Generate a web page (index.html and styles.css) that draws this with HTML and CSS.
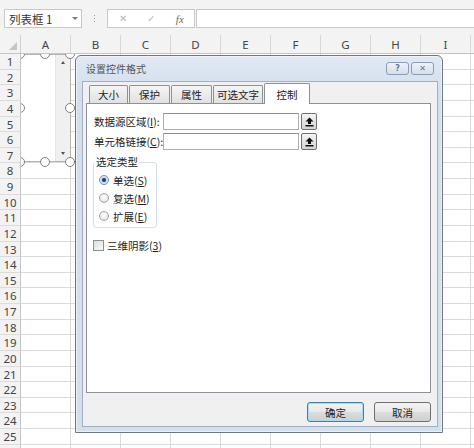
FILE: index.html
```html
<!DOCTYPE html>
<html>
<head>
<meta charset="utf-8">
<link rel="stylesheet" href="styles.css">
</head>
<body>
<div class="toolbar">
  <div class="namebox"><span>列表框 1</span><span class="caret"></span></div>
  <div class="dots"><i></i><i></i><i></i></div>
  <div class="fxbox"><span class="fi">✕</span><span class="fi">✓</span><span class="fi fx">fx</span></div>
  <div class="formula"></div>
</div>
<div class="sheet">
  <div class="hrow">
    <div class="corner"><span class="tri"></span></div>
    <div class="ch">A</div><div class="ch">B</div><div class="ch">C</div><div class="ch">D</div><div class="ch">E</div><div class="ch">F</div><div class="ch">G</div><div class="ch">H</div><div class="ch">I</div><div class="ch"></div>
  </div>
  <div class="row"><div class="rn">1</div><div class="cells"></div></div>
  <div class="row"><div class="rn">2</div><div class="cells"></div></div>
  <div class="row"><div class="rn">3</div><div class="cells"></div></div>
  <div class="row"><div class="rn">4</div><div class="cells"></div></div>
  <div class="row"><div class="rn">5</div><div class="cells"></div></div>
  <div class="row"><div class="rn">6</div><div class="cells"></div></div>
  <div class="row"><div class="rn">7</div><div class="cells"></div></div>
  <div class="row"><div class="rn">8</div><div class="cells"></div></div>
  <div class="row"><div class="rn">9</div><div class="cells"></div></div>
  <div class="row"><div class="rn">10</div><div class="cells"></div></div>
  <div class="row"><div class="rn">11</div><div class="cells"></div></div>
  <div class="row"><div class="rn">12</div><div class="cells"></div></div>
  <div class="row"><div class="rn">13</div><div class="cells"></div></div>
  <div class="row"><div class="rn">14</div><div class="cells"></div></div>
  <div class="row"><div class="rn">15</div><div class="cells"></div></div>
  <div class="row"><div class="rn">16</div><div class="cells"></div></div>
  <div class="row"><div class="rn">17</div><div class="cells"></div></div>
  <div class="row"><div class="rn">18</div><div class="cells"></div></div>
  <div class="row"><div class="rn">19</div><div class="cells"></div></div>
  <div class="row"><div class="rn">20</div><div class="cells"></div></div>
  <div class="row"><div class="rn">21</div><div class="cells"></div></div>
  <div class="row"><div class="rn">22</div><div class="cells"></div></div>
  <div class="row"><div class="rn">23</div><div class="cells"></div></div>
  <div class="row"><div class="rn">24</div><div class="cells"></div></div>
  <div class="row"><div class="rn">25</div><div class="cells"></div></div>
  <div class="row"><div class="rn"></div><div class="cells"></div></div>

  <div class="listbox">
    <div class="lbody"></div>
    <div class="sb"><span class="up"></span><span class="down"></span></div>
  </div>
  <span class="hd h1"></span><span class="hd h2"></span><span class="hd h3"></span>
  <span class="hd h4"></span><span class="hd h5"></span>
  <span class="hd h6"></span><span class="hd h7"></span><span class="hd h8"></span>

  <div class="dlg">
    <div class="tbar">
      <span class="title">设置控件格式</span>
      <span class="tbtn help">?</span>
      <span class="tbtn close">✕</span>
    </div>
    <div class="client">
      <div class="tabs">
        <div class="tab w1">大小</div>
        <div class="tab w2">保护</div>
        <div class="tab w3">属性</div>
        <div class="tab w4">可选文字</div>
        <div class="tab w5 on">控制</div>
      </div>
      <div class="panel">
        <div class="frow">
          <span class="flabel">数据源区域(<u>I</u>):</span>
          <span class="finput"></span>
          <span class="rbtn"><svg width="9" height="10" viewBox="0 0 9 10"><path d="M4.5 0.5 L8.5 4.5 H6 V7 H3 V4.5 H0.5 Z" fill="#111"/><rect x="0.5" y="8" width="8" height="1.5" fill="#111"/></svg></span>
        </div>
        <div class="frow">
          <span class="flabel">单元格链接(<u>C</u>):</span>
          <span class="finput"></span>
          <span class="rbtn"><svg width="9" height="10" viewBox="0 0 9 10"><path d="M4.5 0.5 L8.5 4.5 H6 V7 H3 V4.5 H0.5 Z" fill="#111"/><rect x="0.5" y="8" width="8" height="1.5" fill="#111"/></svg></span>
        </div>
        <fieldset class="group">
          <legend>选定类型</legend>
          <div class="opt"><span class="radio on"></span><span>单选(<u>S</u>)</span></div>
          <div class="opt"><span class="radio"></span><span>复选(<u>M</u>)</span></div>
          <div class="opt"><span class="radio"></span><span>扩展(<u>E</u>)</span></div>
        </fieldset>
        <div class="chk"><span class="cbox"></span><span>三维阴影(<u>3</u>)</span></div>
      </div>
      <div class="btns">
        <span class="btn def">确定</span>
        <span class="btn">取消</span>
      </div>
    </div>
  </div>
</div>
</body>
</html>
```
FILE: styles.css
```css
body {
  margin: 0;
  width: 474px;
  height: 448px;
  overflow: hidden;
  background: #fff;
  font-family: "Noto Sans CJK SC", sans-serif;
}

/* toolbar */
.toolbar {
  display: flex;
  align-items: flex-start;
  height: 35px;
  box-sizing: border-box;
  padding-top: 9px;
  background: #f3f3f3;
}
.namebox {
  margin-left: 4px;
  width: 78px;
  height: 19px;
  flex: none;
  box-sizing: border-box;
  border: 1px solid #c8c8c8;
  background: #fff;
  display: flex;
  align-items: center;
  justify-content: space-between;
  padding: 0 3px 0 4px;
  font-size: 11.5px;
  color: #333;
}
.caret {
  width: 0;
  height: 0;
  border-left: 3px solid transparent;
  border-right: 3px solid transparent;
  border-top: 3px solid #777;
}
.dots {
  width: 25px;
  height: 19px;
  flex: none;
  display: flex;
  flex-direction: column;
  align-items: center;
  justify-content: center;
  gap: 2px;
}
.dots i {
  display: block;
  width: 1px;
  height: 1px;
  background: #9a9a9a;
}
.fxbox {
  width: 88px;
  height: 19px;
  flex: none;
  box-sizing: border-box;
  border: 1px solid #c8c8c8;
  background: #fff;
  display: grid;
  grid-template-columns: repeat(3, 1fr);
  align-items: center;
  justify-items: center;
  padding-left: 1px;
}
.fi {
  font-family: "DejaVu Sans", sans-serif;
  font-size: 10px;
  color: #b9b9b9;
}
.fx {
  font-family: "Liberation Serif", serif;
  font-style: italic;
  font-size: 11px;
  color: #6a6a6a;
}
.formula {
  flex: 1;
  margin-left: 1px;
  height: 19px;
  box-sizing: border-box;
  border: 1px solid #c8c8c8;
  border-right: none;
  background: #fff;
}

/* sheet */
.sheet {
  position: relative;
  height: 413px;
  overflow: hidden;
}
.hrow {
  display: flex;
  height: 19px;
  box-sizing: border-box;
  background: #f3f3f3;
  border-bottom: 1px solid #c4c4c4;
  position: relative;
  z-index: 2;
}
.corner {
  width: 21px;
  flex: none;
  box-sizing: border-box;
  border-right: 1px solid #d0d0d0;
  position: relative;
}
.tri {
  position: absolute;
  right: 3px;
  bottom: 3px;
  width: 0;
  height: 0;
  border-left: 8px solid transparent;
  border-bottom: 8px solid #c4c4c4;
}
.ch {
  width: 50px;
  flex: none;
  box-sizing: border-box;
  border-right: 1px solid #d7d7d7;
  display: flex;
  align-items: center;
  justify-content: center;
  font-family: "Noto Sans", sans-serif;
  font-size: 11.5px;
  color: #444;
}
.row {
  display: flex;
  height: 15.625px;
}
.rn {
  width: 21px;
  flex: none;
  box-sizing: border-box;
  background: #f3f3f3;
  border-right: 1px solid #c4c4c4;
  border-bottom: 1px solid #dcdcdc;
  font-family: "Noto Sans", sans-serif;
  font-size: 11.5px;
  line-height: 15px;
  text-align: center;
  color: #444;
  position: relative;
  z-index: 2;
}
.cells {
  flex: 1;
  box-sizing: border-box;
  border-bottom: 1px solid #dadada;
  background-image: repeating-linear-gradient(to right, transparent 0, transparent 49px, #dadada 49px, #dadada 50px);
}

/* list box control */
.listbox {
  position: absolute;
  left: 20px;
  top: 19px;
  width: 51px;
  height: 108px;
  box-sizing: border-box;
  border: 1px solid #b5b5b5;
  background: #fff;
  display: flex;
  z-index: 1;
}
.lbody { flex: 1; }
.sb {
  width: 15px;
  flex: none;
  box-sizing: border-box;
  background: #f0f0f0;
  border-left: 1px solid #e6e6e6;
  display: flex;
  flex-direction: column;
  align-items: center;
  justify-content: space-between;
  padding: 6px 0 6px;
}
.up {
  width: 0; height: 0;
  border-left: 2.5px solid transparent;
  border-right: 2.5px solid transparent;
  border-bottom: 3px solid #555;
}
.down {
  width: 0; height: 0;
  border-left: 2.5px solid transparent;
  border-right: 2.5px solid transparent;
  border-top: 3px solid #555;
}
.hd {
  position: absolute;
  width: 10px;
  height: 10px;
  box-sizing: border-box;
  border: 1px solid #808080;
  border-radius: 50%;
  background: #fff;
  z-index: 1;
}
.h1 { left: 15px; top: 14px; }
.h2 { left: 40px; top: 14px; }
.h3 { left: 65px; top: 14px; }
.h4 { left: 15px; top: 68px; }
.h5 { left: 65px; top: 68px; }
.h6 { left: 15px; top: 122px; }
.h7 { left: 40px; top: 122px; }
.h8 { left: 65px; top: 122px; }

/* dialog */
.dlg {
  position: absolute;
  left: 75px;
  top: 20px;
  width: 368px;
  height: 378px;
  box-sizing: border-box;
  border: 1px solid #6d7682;
  border-radius: 6px 6px 0 0;
  background: linear-gradient(#e0e9f4, #d2deec 40px, #d4dfec);
  box-shadow: inset 0 0 0 1px rgba(255, 255, 255, 0.55);
  display: flex;
  flex-direction: column;
  padding: 0 4px 5px 6px;
  z-index: 3;
  font-size: 10.5px;
  color: #222;
}
.tbar {
  height: 25px;
  flex: none;
  display: flex;
  align-items: flex-start;
  padding-left: 4px;
}
.title {
  flex: 1;
  font-size: 10px;
  line-height: 25px;
  color: #555;
}
.tbtn {
  margin-top: 6px;
  width: 23px;
  height: 13px;
  box-sizing: border-box;
  border: 1px solid #8b9cb4;
  border-radius: 3px;
  background: linear-gradient(#edf2f8, #d5dfec);
  display: flex;
  align-items: center;
  justify-content: center;
  font-family: "DejaVu Sans", sans-serif;
  font-size: 8px;
  font-weight: bold;
  color: #6c7787;
}
.help { margin-right: 2px; }
.close { margin-right: 4px; }
.client {
  flex: 1;
  border: 1px solid #9fb0c5;
  background: #f0f0f0;
  display: flex;
  flex-direction: column;
  padding: 1px 6px 0 3px;
}
.tabs {
  display: flex;
  align-items: flex-end;
  height: 21px;
  padding-left: 3px;
  margin-bottom: -1px;
  position: relative;
  z-index: 1;
}
.tab {
  height: 18px;
  box-sizing: border-box;
  border: 1px solid #8d9096;
  border-bottom: none;
  border-radius: 2px 2px 0 0;
  background: linear-gradient(#f5f5f5, #e1e1e1);
  margin: 0 1px 1px 0;
  display: flex;
  align-items: center;
  justify-content: center;
}
.tab.on {
  height: 21px;
  background: #fff;
  margin-bottom: 0;
}
.w1 { width: 39px; }
.w2 { width: 41px; }
.w3 { width: 41px; }
.w4 { width: 50px; }
.w5 { width: 46px; }
.panel {
  height: 290px;
  flex: none;
  box-sizing: border-box;
  border: 1px solid #8d9096;
  background: #fff;
  padding: 9px 0 0 6px;
}
.frow {
  display: flex;
  align-items: center;
  height: 17px;
  margin-bottom: 3px;
  padding-left: 1px;
}
.flabel {
  width: 69px;
  flex: none;
  white-space: nowrap;
}
.finput {
  width: 136px;
  height: 17px;
  box-sizing: border-box;
  border: 1px solid #abadb3;
  border-top-color: #8c8f96;
  background: #fff;
}
.rbtn {
  margin-left: 2px;
  width: 16px;
  height: 17px;
  box-sizing: border-box;
  border: 1px solid #707070;
  border-radius: 2px;
  background: linear-gradient(#f6f6f6, #e3e3e3 50%, #d4d4d4);
  display: flex;
  align-items: center;
  justify-content: center;
}
.group {
  margin: 5px 0 0 0;
  width: 64px;
  box-sizing: border-box;
  border: 1px solid #d5dfe5;
  border-radius: 3px;
  padding: 2px 0 2px 1px;
}
.group legend {
  padding: 0 1px;
  line-height: 14px;
}
.opt {
  display: flex;
  align-items: center;
  height: 18px;
  margin-left: 4px;
  gap: 4px;
  white-space: nowrap;
}
.radio {
  width: 10px;
  height: 10px;
  flex: none;
  box-sizing: border-box;
  border: 1px solid #a3a3a3;
  border-radius: 50%;
  background: radial-gradient(circle at 50% 40%, #ffffff, #dcdcdc);
}
.radio.on {
  border-color: #6f8fb3;
  background: radial-gradient(circle, #1e3a5c 0, #2d5a8c 1.8px, #cfe0f2 2.6px, #eef4fa 5px);
}
.chk {
  display: flex;
  align-items: center;
  height: 14px;
  margin-top: 10px;
  gap: 3px;
}
.cbox {
  width: 11px;
  height: 11px;
  box-sizing: border-box;
  border: 1px solid #8f8f8f;
  background: linear-gradient(135deg, #dcdcdc, #fbfbfb);
}
.btns {
  display: flex;
  justify-content: flex-end;
  gap: 10px;
  margin-top: 9px;
}
.btn {
  width: 57px;
  height: 20px;
  box-sizing: border-box;
  border: 1px solid #707070;
  border-radius: 3px;
  background: linear-gradient(#f3f3f3, #e8e8e8 48%, #dcdcdc 52%, #cfcfcf);
  display: flex;
  align-items: center;
  justify-content: center;
}
.btn.def {
  border-color: #3c7fb1;
  box-shadow: inset 0 0 0 1px #a8d9f5;
}
```
